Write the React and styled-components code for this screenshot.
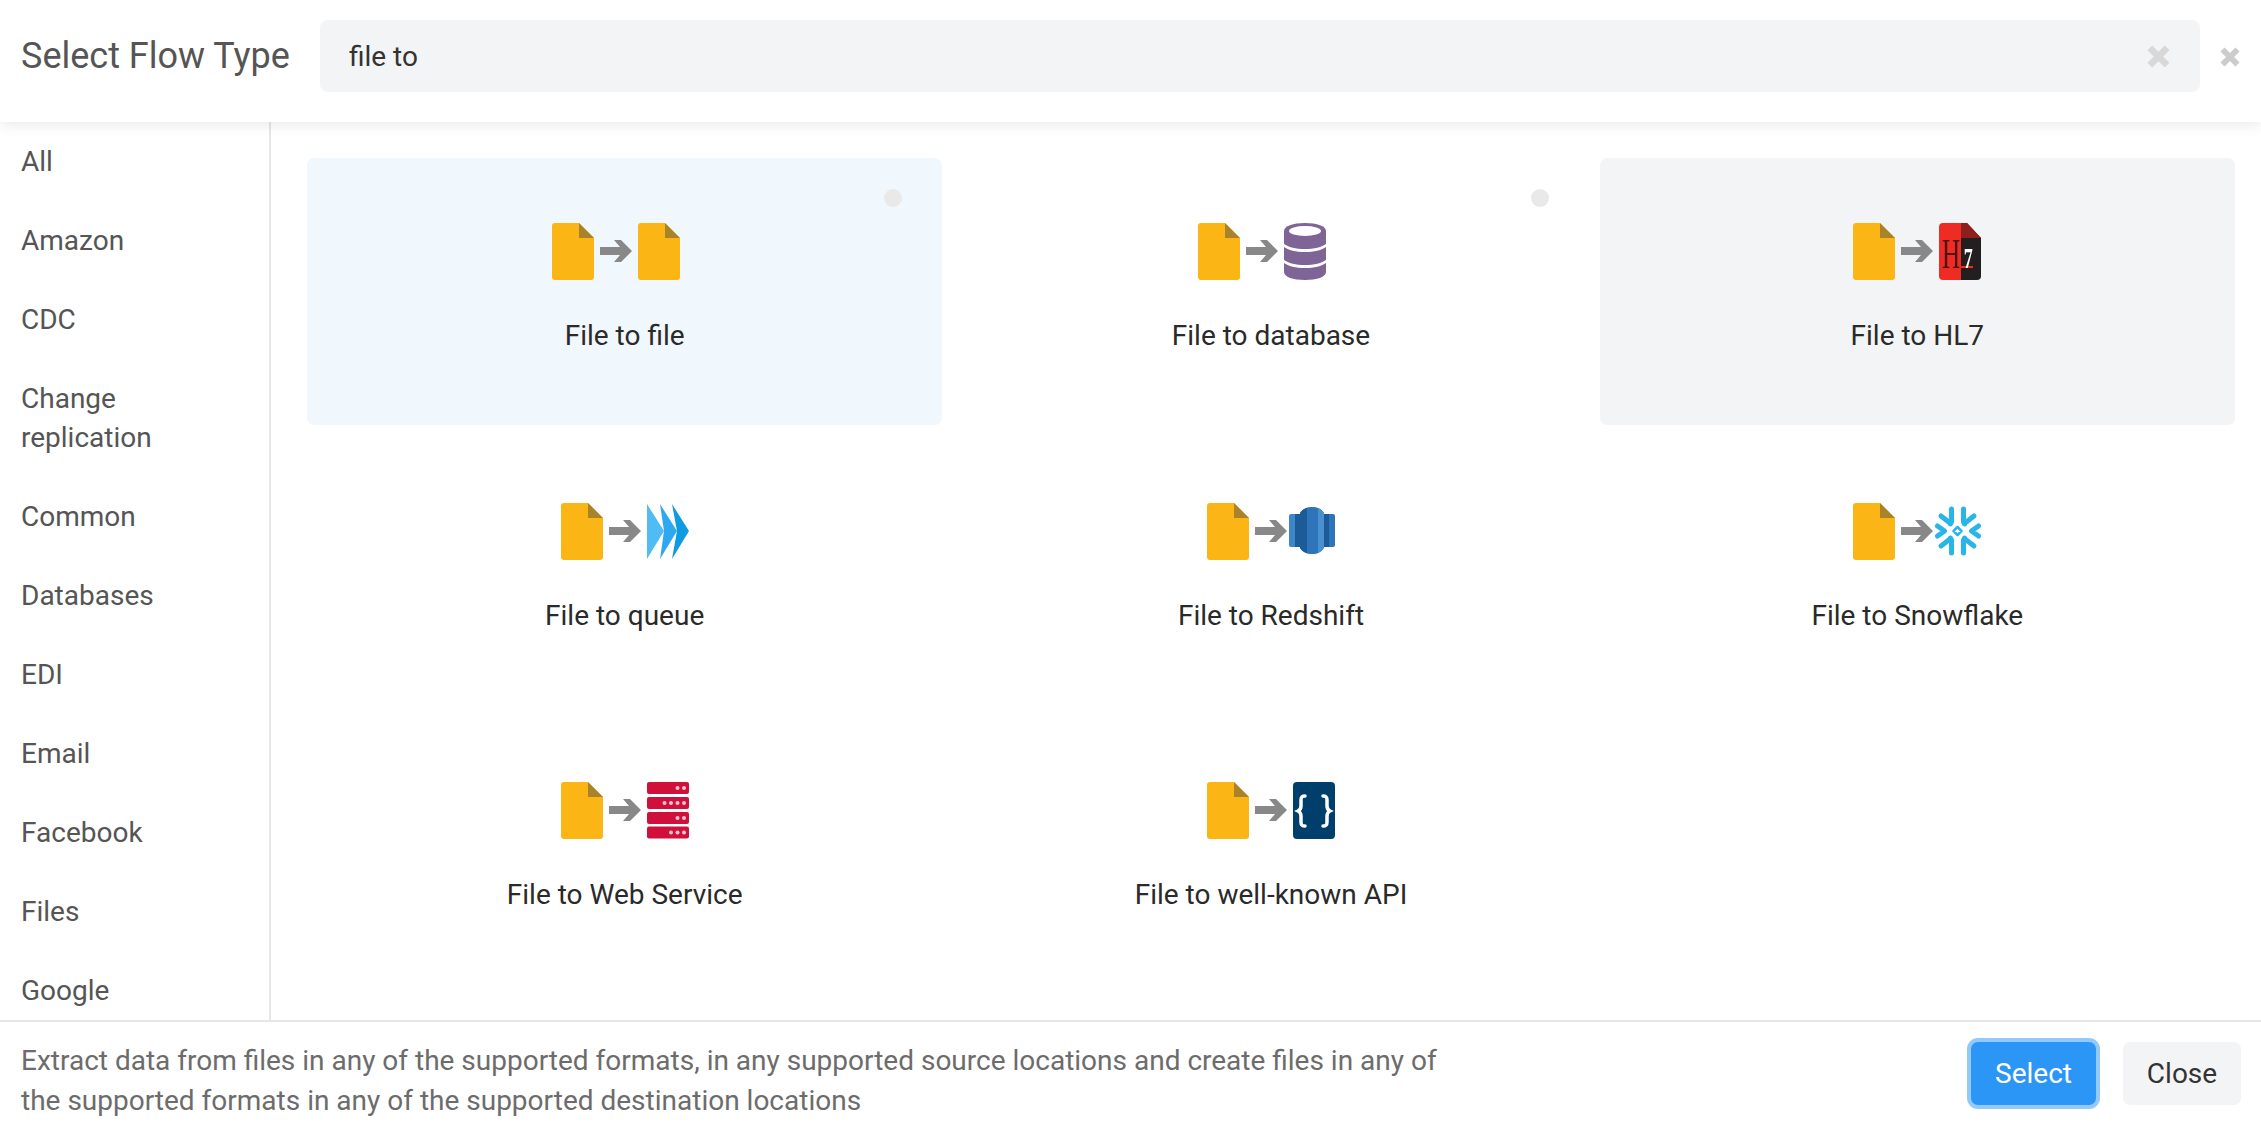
import React from 'react';
import styled, { createGlobalStyle } from 'styled-components';

const GlobalStyle = createGlobalStyle`
  html, body {
    margin: 0;
    padding: 0;
    height: 100%;
    overflow: hidden;
    background: #fff;
    font-family: Roboto, "Liberation Sans", sans-serif;
  }
`;

const categories = [
  'All', 'Amazon', 'CDC', 'Change replication', 'Common', 'Databases',
  'EDI', 'Email', 'Facebook', 'Files', 'Google'
];

//Target icons, drawn in a box 57 high starting at the x given in targets below
const DatabaseIcon = () => (
  <g fill="#7f6498">
    <path d="M0 8C0 3 9 0 21 0s21 3 21 8v13c-4 3-12 5-21 5S4 24 0 21z" />
    <path d="M0 24c4 3 12 5 21 5s17-2 21-5v13c-4 3-12 5-21 5S4 40 0 37z" />
    <path d="M0 40c4 3 12 5 21 5s17-2 21-5v9c0 5-9 8-21 8S0 54 0 49z" />
    <ellipse cx="21" cy="8" rx="16" ry="5" fill="#fff" />
  </g>
);

const Hl7Icon = () => (
  <g>
    <path d="M4 0h18v57H4a4 4 0 0 1-4-4V4a4 4 0 0 1 4-4z" fill="#ef2c24" />
    <path d="M22 0h6l14 15v38a4 4 0 0 1-4 4H22z" fill="#231f20" />
    <path d="M22 0h6l14 15H22z" fill="#8f1f1b" />
    <path d="M21 44h13" stroke="#ef2c24" strokeWidth="2" />
    <text transform="scale(0.6 1)" x="5" y="45" fontFamily="Liberation Serif, serif" fontSize="42" fill="#4a1512">
      H<tspan dx="6" fontWeight="700" fontSize="30" fill="#fff">7</tspan>
    </text>
  </g>
);

const QueueIcon = () => (
  <g>
    <path d="M0 1l17 27L0 56z" fill="#4fbdf4" />
    <path d="M13 1l17 27-17 28 4-28z" fill="#2ea9ef" />
    <path d="M25 1l17 27-17 28 5-28z" fill="#0e9be0" />
  </g>
);

const RedshiftIcon = () => (
  <g>
    <path d="M2 11h9v33H2a2 2 0 0 1-2-2V13a2 2 0 0 1 2-2z" fill="#3f86c8" />
    <rect x="6" y="11" width="5" height="33" fill="#1d5a98" />
    <path d="M35 11h9a2 2 0 0 1 2 2v29a2 2 0 0 1-2 2h-9z" fill="#2d74bb" />
    <rect x="35" y="11" width="5" height="33" fill="#1d5a98" />
    <path d="M11 10c3-4 6-6 12-6s9 2 12 6v35c-3 4-6 6-12 6s-9-2-12-6z" fill="#2d74bb" />
    <path d="M11 10c2-3 4-4 7-5v45c-3-1-5-2-7-5z" fill="#1d5a98" />
    <path d="M29 5c3 1 4 3 6 5v35c-2 2-3 4-6 5z" fill="#4a90d0" />
  </g>
);

const SnowflakeIcon = () => (
  <g stroke="#29b5e8" strokeWidth="5" strokeLinecap="round" strokeLinejoin="round" fill="none">
    <path d="M16.500 6v13l-1 2M28.500 6v13l1 2M16.500 50V37l-1-2M28.500 50V37l1-2" />
    <path d="M6 13l9 7M39 13l-9 7M6 43l9-7M39 43l-9-7" />
    <path d="M2.500 23l7 5-7 5M43.500 23l-7 5 7 5" />
    <path d="M22.500 24l4 4-4 4-4-4z" strokeWidth="2.500" />
  </g>
);

const ServerRow = ({ y, dots }) => (
  <g>
    <rect x="0" y={y} width="42" height="12" rx="2" fill="#d0103a" />
    {Array.from({ length: dots }).map((_, i) => (
      <circle key={i} cx={37 - i * 6.500} cy={y + 6} r="2" fill="#f3c6d0" />
    ))}
  </g>
);

const ServerIcon = () => (
  <g>
    <ServerRow y={0} dots={2} />
    <ServerRow y={15} dots={4} />
    <ServerRow y={30} dots={2} />
    <ServerRow y={44.500} dots={3} />
  </g>
);

const ApiIcon = () => (
  <g>
    <rect x="0" y="0" width="42" height="57" rx="4" fill="#003f6b" />
    <g stroke="#fff" strokeWidth="3.500" strokeLinecap="round" fill="none">
      <path d="M12 14c-3 0-4 1-4 4v6c0 3-1 4-3 5 2 1 3 2 3 5v6c0 3 1 4 4 4" />
      <path d="M30 14c3 0 4 1 4 4v6c0 3 1 4 3 5-2 1-3 2-3 5v6c0 3-1 4-4 4" />
    </g>
  </g>
);

const SourceFile = () => (
  <g>
    <path d="M3 0h24l15 15v39a3 3 0 0 1-3 3H3a3 3 0 0 1-3-3V3a3 3 0 0 1 3-3z" fill="#fbb615" />
    <path d="M27 0l15 15H27z" fill="#a8832a" />
  </g>
);

const targets = {
  file: { x: 86, icon: <SourceFile /> },
  database: { x: 86, icon: <DatabaseIcon /> },
  hl7: { x: 86, icon: <Hl7Icon /> },
  queue: { x: 86, icon: <QueueIcon /> },
  redshift: { x: 82, icon: <RedshiftIcon /> },
  snowflake: { x: 82, icon: <SnowflakeIcon /> },
  server: { x: 86, icon: <ServerIcon /> },
  api: { x: 86, icon: <ApiIcon /> }
};

const FlowIcon = ({ target }) => (
  <IconSvg width="128" height="57" viewBox="0 0 128 57">
    <SourceFile />
    <path d="M48 24h20l-6-7h7l11 11-11 11h-7l6-7H48z" fill="#888" />
    <g transform={`translate(${targets[target].x} 0)`}>{targets[target].icon}</g>
  </IconSvg>
);

const flows = [
  { name: 'File to file', target: 'file', pinned: true, state: 'selected' },
  { name: 'File to database', target: 'database', pinned: true },
  { name: 'File to HL7', target: 'hl7', state: 'hover' },
  { name: 'File to queue', target: 'queue' },
  { name: 'File to Redshift', target: 'redshift' },
  { name: 'File to Snowflake', target: 'snowflake' },
  { name: 'File to Web Service', target: 'server' },
  { name: 'File to well-known API', target: 'api' }
];

const CrossIcon = ({ size, color }) => (
  <svg width={size} height={size} viewBox="0 0 24 24">
    <path d="M3 3l18 18M21 3L3 21" stroke={color} strokeWidth="7" />
  </svg>
);

const App = () => {
  return (
    <Page>
      <GlobalStyle />
      <Header>
        <Title>Select Flow Type</Title>
        <SearchBox>
          <SearchInput type="text" defaultValue="file to" />
          <CrossIcon size={23} color="#d8d8d8" />
        </SearchBox>
        <CloseCross>
          <CrossIcon size={20} color="#cccccc" />
        </CloseCross>
      </Header>

      <Body>
        <Sidebar>
          {categories.map(cat => (
            <SidebarItem key={cat}>{cat}</SidebarItem>
          ))}
        </Sidebar>
        <FlowGrid>
          {flows.map(flow => (
            <FlowCard key={flow.name} $state={flow.state}>
              {flow.pinned && <PinDot />}
              <IconHolder $pinned={flow.pinned}>
                <FlowIcon target={flow.target} />
              </IconHolder>
              <FlowName>{flow.name}</FlowName>
            </FlowCard>
          ))}
        </FlowGrid>
      </Body>

      <Footer>
        <Description>
          Extract data from files in any of the supported formats, in any supported source locations and create files in any of the supported formats in any of the supported destination locations
        </Description>
        <Buttons>
          <PrimaryButton>Select</PrimaryButton>
          <SecondaryButton>Close</SecondaryButton>
        </Buttons>
      </Footer>
    </Page>
  );
};

//Component Styles
const Page = styled.div`
  height: 100vh;
  display: flex;
  flex-direction: column;
  overflow: hidden;
`;

const Header = styled.div`
  flex: 0 0 122px;
  box-sizing: border-box;
  display: flex;
  align-items: flex-start;
  padding: 20px 21px 0;
  position: relative;
  z-index: 1;
  background: #fff;
  box-shadow: 0 4px 12px rgba(0, 0, 0, 0.08);
`;

const Title = styled.div`
  flex: 0 0 299px;
  font-size: 36px;
  line-height: 72px;
  color: #555;
  white-space: nowrap;
`;

const SearchBox = styled.div`
  flex: 1;
  height: 72px;
  box-sizing: border-box;
  display: flex;
  align-items: center;
  padding: 0 30px 0 29px;
  background: #f3f4f6;
  border-radius: 8px;
`;

const SearchInput = styled.input`
  flex: 1;
  border: none;
  outline: none;
  padding: 0;
  background: transparent;
  font-family: inherit;
  font-size: 28px;
  color: #333;
`;

const CloseCross = styled.div`
  flex: 0 0 auto;
  display: flex;
  margin: 27px 0 0 20px;
`;

const Body = styled.div`
  flex: 1;
  min-height: 0;
  display: flex;
`;

const Sidebar = styled.div`
  flex: 0 0 271px;
  box-sizing: border-box;
  border-right: 2px solid #e6e6e6;
  overflow: hidden;
`;

const SidebarItem = styled.div`
  padding: 20px 40px 20px 21px;
  font-size: 28px;
  line-height: 39px;
  color: #555;
`;

const FlowGrid = styled.div`
  flex: 1;
  box-sizing: border-box;
  padding: 36px 26px 0 36px;
  display: grid;
  grid-template-columns: repeat(3, 1fr);
  grid-auto-rows: 267px;
  column-gap: 11px;
  row-gap: 12.500px;
  align-content: start;
`;

const FlowCard = styled.div`
  position: relative;
  padding-top: 65px;
  box-sizing: border-box;
  display: flex;
  flex-direction: column;
  align-items: center;
  border-radius: 7px;
  background: ${p =>
    p.$state === 'selected' ? '#f0f7fd' : p.$state === 'hover' ? '#f3f4f6' : 'transparent'};
`;

const PinDot = styled.span`
  position: absolute;
  top: 31px;
  right: 40px;
  width: 18px;
  height: 18px;
  border-radius: 50%;
  background: #e9e9e9;
`;

const IconHolder = styled.div`
  display: flex;
  height: 57px;
  padding-right: ${p => (p.$pinned ? '18px' : '0')};
`;

const IconSvg = styled.svg`
  filter: blur(0.4px);
`;

const FlowName = styled.div`
  margin-top: 36px;
  font-size: 28px;
  line-height: 40px;
  color: #2a2a2a;
`;

const Footer = styled.div`
  flex: 0 0 111px;
  box-sizing: border-box;
  border-top: 2px solid #e6e6e6;
  display: flex;
  align-items: center;
  justify-content: space-between;
  padding: 0 20px 0 21px;
  background: #fff;
`;

const Description = styled.div`
  width: 1440px;
  margin-top: 9px;
  font-size: 28px;
  line-height: 40px;
  color: #6c6c6c;
`;

const Buttons = styled.div`
  display: flex;
  align-items: center;
  gap: 27px;
  margin-bottom: 6px;
`;

const PrimaryButton = styled.button`
  width: 125px;
  height: 63px;
  padding: 0;
  border: none;
  border-radius: 7px;
  background: #2b96f5;
  box-shadow: 0 0 0 4px #93c9fb;
  font-family: inherit;
  font-size: 28px;
  color: #fff;
`;

const SecondaryButton = styled.button`
  width: 118px;
  height: 63px;
  padding: 0;
  border: none;
  border-radius: 7px;
  background: #f3f4f6;
  font-family: inherit;
  font-size: 28px;
  color: #333;
`;

export default App;
